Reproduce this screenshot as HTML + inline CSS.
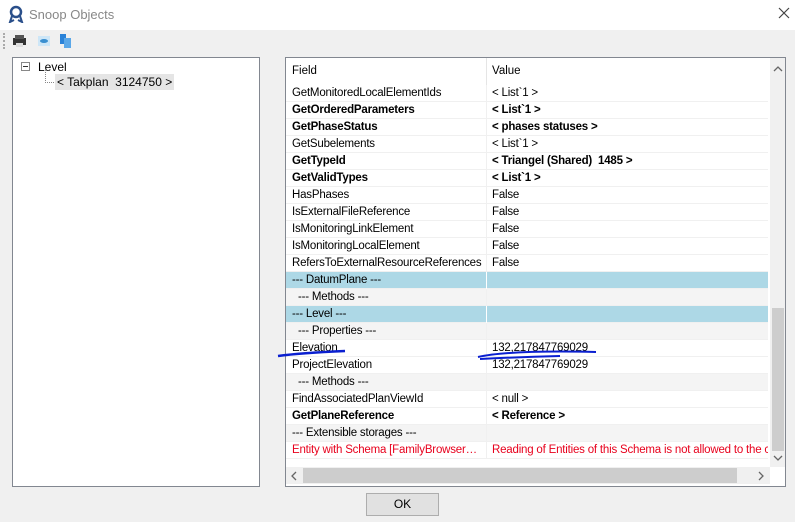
<!DOCTYPE html>
<html><head><style>
body{margin:0;width:795px;height:522px;background:#f0f0f0;font-family:"Liberation Sans",sans-serif;font-size:12px;position:relative;overflow:hidden;color:#000}
.abs{position:absolute}
.title{left:0;top:0;width:795px;height:30px;background:#fff}
.row{position:absolute;left:0;width:482px;height:17px;border-bottom:1px solid #f0f0f0;box-sizing:border-box}
.row span{position:absolute;top:2px;white-space:nowrap;overflow:hidden;font-size:11.5px;letter-spacing:-0.2px}
.row .f{left:6px;width:192px;text-overflow:ellipsis}
.row .v{left:206px;width:276px}
.row .d{position:absolute;left:200px;top:0;width:1px;height:17px;background:#f0f0f0}
.b span{font-weight:bold}
.blue{background:#add8e6}
.sec{background:#f4f4f4}
.red span{color:#e8001c}
</style></head><body>
<div class="abs title"></div>
<svg class="abs" style="left:8px;top:5px" width="16" height="18"><circle cx="8" cy="7" r="5" fill="none" stroke="#2a4f8a" stroke-width="2.5"/><path d="M4 11 L2 17 L6 15 M12 11 L14 17 L10 15" stroke="#2a4f8a" stroke-width="2" fill="none"/></svg>
<div class="abs" style="left:29px;top:7px;font-size:13px;color:#888">Snoop Objects</div>
<svg class="abs" style="left:778px;top:7px" width="12" height="12"><path d="M1 1 L11 11 M11 1 L1 11" stroke="#444" stroke-width="1.2"/></svg>
<div class="abs" style="left:3px;top:33px;width:2px;height:16px;border-left:2px dotted #aaa"></div>
<svg class="abs" style="left:12px;top:33px" width="64" height="16"><rect x="1" y="5" width="13" height="7" fill="#333"/><rect x="3" y="2" width="9" height="4" fill="#555"/><rect x="4" y="10" width="7" height="4" fill="#ddd"/><rect x="26" y="3" width="12" height="10" fill="#cde6f7"/><ellipse cx="32" cy="8" rx="4" ry="2" fill="#3a8fd0"/><rect x="48" y="1" width="6" height="10" fill="#2a82d8"/><rect x="52" y="5" width="7" height="10" fill="#5aa7e8"/></svg>
<div class="abs" style="left:12px;top:57px;width:246px;height:428px;background:#fff;border:1px solid #828790"></div>
<div class="abs" style="left:21px;top:62px;width:7px;height:7px;border:1px solid #888;background:#fff"></div>
<div class="abs" style="left:23px;top:66px;width:5px;height:1px;background:#333"></div>
<div class="abs" style="left:38px;top:60px">Level</div>
<div class="abs" style="left:45px;top:70px;width:8px;height:12px;border-left:1px dotted #888;border-bottom:1px dotted #888"></div>
<div class="abs" style="left:55px;top:74px;padding:1px 2px;background:#e5e5e5">&lt; Takplan&nbsp; 3124750 &gt;</div>
<div class="abs" style="left:285px;top:57px;width:499px;height:428px;background:#fff;border:1px solid #828790"></div>
<div class="abs" style="left:286px;top:58px;width:484px;height:27px;background:#fff"></div>
<div class="abs" style="left:292px;top:65px;font-size:11.5px">Field</div>
<div class="abs" style="left:486px;top:58px;width:1px;height:27px;background:#e5e5e5"></div>
<div class="abs" style="left:492px;top:65px;font-size:11.5px">Value</div>
<div class="abs" style="left:286px;top:85px;width:484px;height:382px;overflow:hidden">
<div class="row" style="top:0"><span class="f">GetMonitoredLocalElementIds</span><i class="d"></i><span class="v">&lt; List`1 &gt;</span></div>
<div class="row b" style="top:17px"><span class="f">GetOrderedParameters</span><i class="d"></i><span class="v">&lt; List`1 &gt;</span></div>
<div class="row b" style="top:34px"><span class="f">GetPhaseStatus</span><i class="d"></i><span class="v">&lt; phases statuses &gt;</span></div>
<div class="row" style="top:51px"><span class="f">GetSubelements</span><i class="d"></i><span class="v">&lt; List`1 &gt;</span></div>
<div class="row b" style="top:68px"><span class="f">GetTypeId</span><i class="d"></i><span class="v">&lt; Triangel (Shared)&nbsp; 1485 &gt;</span></div>
<div class="row b" style="top:85px"><span class="f">GetValidTypes</span><i class="d"></i><span class="v">&lt; List`1 &gt;</span></div>
<div class="row" style="top:102px"><span class="f">HasPhases</span><i class="d"></i><span class="v">False</span></div>
<div class="row" style="top:119px"><span class="f">IsExternalFileReference</span><i class="d"></i><span class="v">False</span></div>
<div class="row" style="top:136px"><span class="f">IsMonitoringLinkElement</span><i class="d"></i><span class="v">False</span></div>
<div class="row" style="top:153px"><span class="f">IsMonitoringLocalElement</span><i class="d"></i><span class="v">False</span></div>
<div class="row" style="top:170px"><span class="f">RefersToExternalResourceReferences</span><i class="d"></i><span class="v">False</span></div>
<div class="row blue" style="top:187px"><span class="f">--- DatumPlane ---</span><i class="d" style="background:#fff"></i></div>
<div class="row sec" style="top:204px"><span class="f">&nbsp; --- Methods ---</span><i class="d"></i></div>
<div class="row blue" style="top:221px"><span class="f">--- Level ---</span><i class="d" style="background:#fff"></i></div>
<div class="row sec" style="top:238px"><span class="f">&nbsp; --- Properties ---</span><i class="d"></i></div>
<div class="row" style="top:255px"><span class="f">Elevation</span><i class="d"></i><span class="v">132,217847769029</span></div>
<div class="row" style="top:272px"><span class="f">ProjectElevation</span><i class="d"></i><span class="v">132,217847769029</span></div>
<div class="row sec" style="top:289px"><span class="f">&nbsp; --- Methods ---</span><i class="d"></i></div>
<div class="row" style="top:306px"><span class="f">FindAssociatedPlanViewId</span><i class="d"></i><span class="v">&lt; null &gt;</span></div>
<div class="row b" style="top:323px"><span class="f">GetPlaneReference</span><i class="d"></i><span class="v">&lt; Reference &gt;</span></div>
<div class="row sec" style="top:340px"><span class="f">--- Extensible storages ---</span><i class="d"></i></div>
<div class="row red" style="top:357px"><span class="f">Entity with Schema [FamilyBrowserStat...</span><i class="d"></i><span class="v">Reading of Entities of this Schema is not allowed to the current</span></div>
</div>
<svg class="abs" style="left:0;top:335px" width="620" height="30"><path d="M278 21 Q300 18 345 16" stroke="#0a1fd0" stroke-width="2.5" fill="none"/><path d="M478 22 Q510 15 596 17 M480 24 Q520 22 560 21" stroke="#0a1fd0" stroke-width="2" fill="none"/></svg>
<div class="abs" style="left:770px;top:58px;width:15px;height:409px;background:#f0f0f0"></div>
<div class="abs" style="left:772px;top:308px;width:12px;height:143px;background:#cdcdcd"></div>
<svg class="abs" style="left:773px;top:66px" width="10" height="6"><path d="M1 5 L5 1 L9 5" stroke="#666" fill="none" stroke-width="1.3"/></svg>
<svg class="abs" style="left:773px;top:455px" width="10" height="6"><path d="M1 1 L5 5 L9 1" stroke="#666" fill="none" stroke-width="1.3"/></svg>
<div class="abs" style="left:286px;top:467px;width:484px;height:17px;background:#f0f0f0"></div>
<div class="abs" style="left:303px;top:468px;width:434px;height:15px;background:#cdcdcd"></div>
<svg class="abs" style="left:291px;top:471px" width="6" height="10"><path d="M5 1 L1 5 L5 9" stroke="#666" fill="none" stroke-width="1.3"/></svg>
<svg class="abs" style="left:758px;top:471px" width="6" height="10"><path d="M1 1 L5 5 L1 9" stroke="#666" fill="none" stroke-width="1.3"/></svg>
<div class="abs" style="left:366px;top:493px;width:71px;height:21px;background:#e1e1e1;border:1px solid #adadad;text-align:center;line-height:21px;font-size:12px">OK</div>
</body></html>
